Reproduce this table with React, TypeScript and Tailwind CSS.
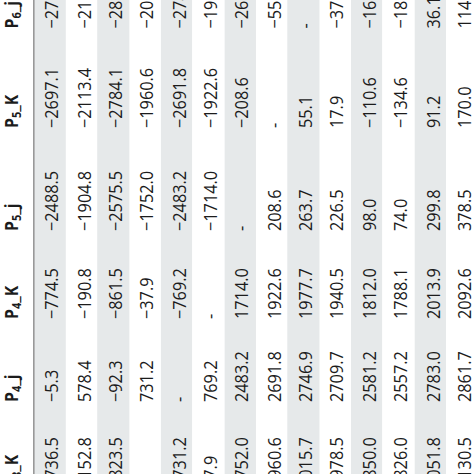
const heads = [
  { n: "3", s: "K" },
  { n: "4", s: "j" },
  { n: "4", s: "K" },
  { n: "5", s: "j" },
  { n: "5", s: "K" },
  { n: "6", s: "j" },
];

const widths = ["w-[86px]", "w-[83px]", "w-[88px]", "w-[103px]", "w-[99.5px]", "w-[130px]"];

const rows = [
  ["−736.5", "−5.3", "−774.5", "−2488.5", "−2697.1", "−2752.2"],
  ["−152.8", "578.4", "−190.8", "−1904.8", "−2113.4", "−2168.5"],
  ["−823.5", "−92.3", "−861.5", "−2575.5", "−2784.1", "−2839.2"],
  ["-", "731.2", "−37.9", "−1752.0", "−1960.6", "−2015.7"],
  ["−731.2", "-", "−769.2", "−2483.2", "−2691.8", "−2746.9"],
  ["37.9", "769.2", "-", "−1714.0", "−1922.6", "−1977.7"],
  ["1752.0", "2483.2", "1714.0", "-", "−208.6", "−263.7"],
  ["1960.6", "2691.8", "1922.6", "208.6", "-", "−55.1"],
  ["2015.7", "2746.9", "1977.7", "263.7", "55.1", "-"],
  ["1978.5", "2709.7", "1940.5", "226.5", "17.9", "−37.2"],
  ["1850.0", "2581.2", "1812.0", "98.0", "−110.6", "−165.7"],
  ["1826.0", "2557.2", "1788.1", "74.0", "−134.6", "−189.7"],
  ["2051.8", "2783.0", "2013.9", "299.8", "91.2", "36.1"],
  ["2130.5", "2861.7", "2092.6", "378.5", "170.0", "114.9"],
];

export default function App() {
  return (
    <div className="w-[474px] h-[474px] overflow-hidden bg-white text-[#1c1c1c] font-['Open_Sans',sans-serif]">
      {/* table is laid out upright, then turned a quarter left like the scanned figure */}
      <div className="w-[590px] flex flex-col origin-top-left -rotate-90 scale-y-[1.08] translate-y-[488px]">
        <div className="flex items-start h-[30.6px] border-b-[1.85px] border-[#3d3d3d] box-content">
          {heads.map((h, i) => (
            <div key={i} className={`${widths[i]} shrink-0 whitespace-nowrap font-bold text-[15.8px] leading-[20px] pt-[0.6px]`}>
              P<sub className="text-[11px]">{h.n}</sub>_{h.s}
            </div>
          ))}
        </div>
        {rows.map((r, ri) => (
          <div key={ri} className={`flex items-start h-[29.35px] ${ri % 2 === 0 ? "bg-[#e6e9ea]" : "bg-white"}`}>
            {r.map((v, ci) => (
              <div key={ci} className={`${widths[ci]} shrink-0 whitespace-nowrap font-medium text-[16.3px] leading-[20px] pt-[6.8px]`}>
                {v}
              </div>
            ))}
          </div>
        ))}
      </div>
    </div>
  );
}
